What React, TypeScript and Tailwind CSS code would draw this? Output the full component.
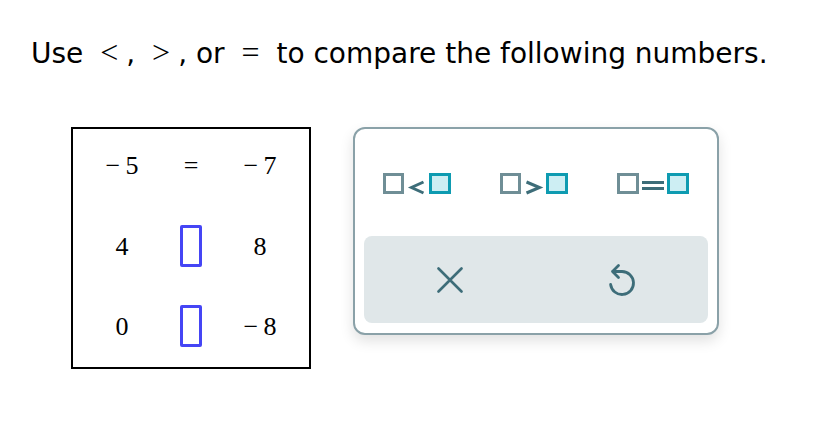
import React from 'react';

const rows = [
  { left: '−\u20095', mid: '=', right: '−\u20097' },
  { left: '4', mid: null, right: '8' },
  { left: '0', mid: null, right: '−\u20098' },
];

function LessIcon() {
  return (
    <svg width="68" height="22" viewBox="0 0 68 22" fill="none">
      <rect x="1.5" y="1.5" width="18" height="18" stroke="#6f8e96" strokeWidth="3" fill="#ffffff" />
      <path d="M40.5 9 L28.5 14.5 L40.5 20" stroke="#3d6d79" strokeWidth="3" strokeLinejoin="miter" />
      <rect x="47.5" y="1.5" width="19" height="18" stroke="#0e9bb1" strokeWidth="3" fill="#cdeef3" />
    </svg>
  );
}

function GreaterIcon() {
  return (
    <svg width="68" height="22" viewBox="0 0 68 22" fill="none">
      <rect x="1.5" y="1.5" width="18" height="18" stroke="#6f8e96" strokeWidth="3" fill="#ffffff" />
      <path d="M26.5 9 L39.5 14.5 L26.5 20" stroke="#3d6d79" strokeWidth="3" strokeLinejoin="miter" />
      <rect x="47.5" y="1.5" width="19" height="18" stroke="#0e9bb1" strokeWidth="3" fill="#cdeef3" />
    </svg>
  );
}

function EqualIcon() {
  return (
    <svg width="72" height="22" viewBox="0 0 72 22" fill="none">
      <rect x="1.5" y="1.5" width="19" height="18" stroke="#6f8e96" strokeWidth="3" fill="#ffffff" />
      <rect x="25" y="8" width="22" height="3" fill="#3d6d79" />
      <rect x="25" y="14" width="22" height="3" fill="#3d6d79" />
      <rect x="51.5" y="1.5" width="19" height="18" stroke="#0e9bb1" strokeWidth="3" fill="#cdeef3" />
    </svg>
  );
}

function ClearIcon() {
  return (
    <svg width="26" height="26" viewBox="0 0 26 26" fill="none">
      <path d="M1.5 1.5 L24.5 24.5 M24.5 1.5 L1.5 24.5" stroke="#3d6d79" strokeWidth="2.6" strokeLinecap="round" />
    </svg>
  );
}

function UndoIcon() {
  return (
    <svg width="44" height="44" viewBox="0 0 44 44" fill="none">
      <path
        d="M18.5 7.5 L12.5 13.5 L18.5 19.5 M12.5 13.5 H22 A11.5 11.5 0 1 1 10.6 26.5"
        stroke="#3d6d79"
        strokeWidth="2.8"
        strokeLinecap="round"
        strokeLinejoin="round"
      />
    </svg>
  );
}

export default function App() {
  return (
    <div className="w-[822px] h-[432px] bg-white overflow-hidden">
      <p className="pl-[31px] pt-[34px] text-[28px] leading-[36px] text-black font-['DejaVu_Sans',Verdana,sans-serif]">
        Use <span className="font-['Liberation_Serif',serif] text-[32px] leading-[36px] mx-[8px]">&lt;</span>,{' '}
        <span className="font-['Liberation_Serif',serif] text-[32px] leading-[36px] mx-[8px]">&gt;</span>, or{' '}
        <span className="font-['Liberation_Serif',serif] text-[32px] leading-[36px] mx-[8px]">=</span> to compare the following numbers.
      </p>

      <div className="flex items-start gap-[42px] pl-[71px] mt-[55px]">
        <div className="w-[240px] h-[242px] border-2 border-black pt-[16px] flex flex-col gap-[40px] font-['Liberation_Serif',serif] text-[26px] text-black">
          {rows.map((r, i) => (
            <div key={i} className="grid grid-cols-[69px_69px_69px] justify-center items-center h-[40px]">
              <div className="text-center">{r.left}</div>
              <div className="flex justify-center">
                {r.mid ? (
                  <span>{r.mid}</span>
                ) : (
                  <span className="block w-[22px] h-[42px] border-[3px] border-[#4545f5] rounded-[2px]" />
                )}
              </div>
              <div className="text-center">{r.right}</div>
            </div>
          ))}
        </div>

        <div className="w-[366px] h-[208px] border-2 border-[#8aa1a8] rounded-[12px] bg-white shadow-[0_6px_14px_rgba(0,0,0,0.12)] px-[9px] pb-[10px] flex flex-col">
          <div className="flex-1 flex items-center justify-center gap-[49px] pt-[2px]">
            <button className="flex"><LessIcon /></button>
            <button className="flex"><GreaterIcon /></button>
            <button className="flex"><EqualIcon /></button>
          </div>
          <div className="h-[87px] bg-[#e0e7e9] rounded-[8px] grid grid-cols-2">
            <button className="flex items-center justify-center"><ClearIcon /></button>
            <button className="flex items-center justify-center"><UndoIcon /></button>
          </div>
        </div>
      </div>
    </div>
  );
}
